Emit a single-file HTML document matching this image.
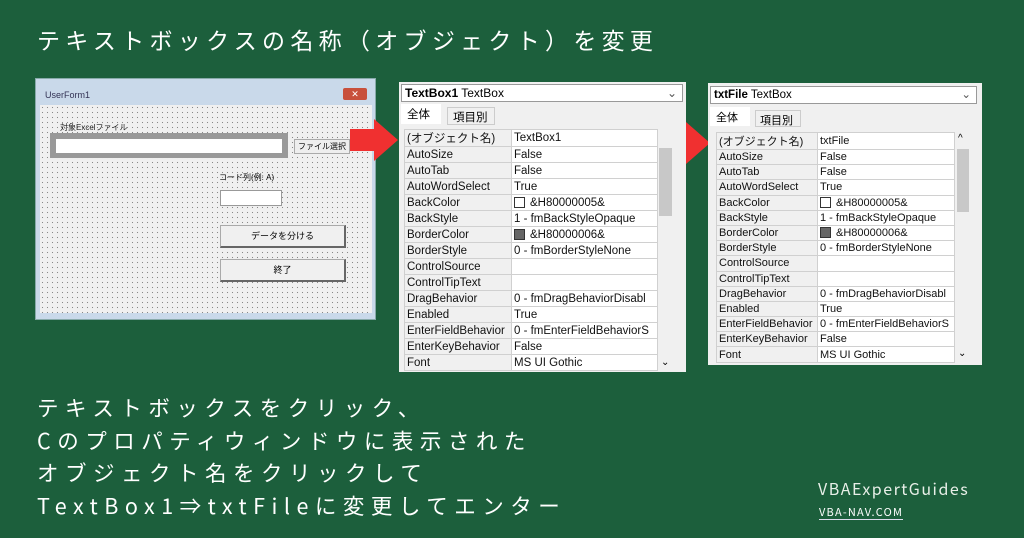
<!DOCTYPE html>
<html><head><meta charset="utf-8"><style>
*{margin:0;padding:0;box-sizing:border-box}
body{width:1024px;height:538px;background:#1c5f3c;position:relative;overflow:hidden;font-family:"Liberation Sans","Noto Sans CJK JP",sans-serif}
.t{position:absolute;color:#fff;font-family:"Noto Sans CJK JP",sans-serif;letter-spacing:2px;white-space:nowrap}
.p{position:absolute;background:#f0f0f0}
.grid{position:absolute;border-collapse:collapse;background:#fff;font-size:11.5px;color:#111;table-layout:fixed}
.grid td{border:1px solid #d0d0d0;padding:0 2px;white-space:nowrap;overflow:hidden}
.grid td:first-child{background:#f0f0f0}
.sw{display:inline-block;width:11px;height:11px;border:1px solid #333;vertical-align:-2px;margin-right:5px}
.arrow{position:absolute;width:0;height:0}
</style></head><body>
<div class="t" style="left:37px;top:22px;font-size:23px;letter-spacing:5.3px">テキストボックスの名称（オブジェクト）を変更</div>

<!-- userform -->
<div class="p" style="left:35px;top:78px;width:341px;height:242px;background:#c9d9ea;border:1px solid #8aa"></div>
<div style="position:absolute;left:45px;top:90px;font-size:9px;color:#335">UserForm1</div>
<div style="position:absolute;left:343px;top:88px;width:24px;height:12px;background:#c8503c;border-radius:2px;color:#fff;font-size:9px;text-align:center;line-height:12px">✕</div>
<div style="position:absolute;left:40px;top:105px;width:332px;height:208px;background-color:#f0f0f0;background-image:radial-gradient(#888 0.6px,transparent 0.8px);background-size:5px 5px"></div>
<div style="position:absolute;left:60px;top:122px;font-size:8px;color:#222">対象Excelファイル</div>
<div style="position:absolute;left:50px;top:133px;width:238px;height:25px;background:#999"></div>
<div style="position:absolute;left:56px;top:139px;width:226px;height:14px;background:#fff"></div>
<div style="position:absolute;left:294px;top:139px;width:56px;height:15px;background:#eee;border:1px solid #aaa;font-size:8px;text-align:center;line-height:13px">ファイル選択</div>
<div style="position:absolute;left:219px;top:172px;font-size:8px">コード列(例: A)</div>
<div style="position:absolute;left:220px;top:190px;width:62px;height:16px;background:#fff;border:1px solid #999"></div>
<div style="position:absolute;left:220px;top:225px;width:126px;height:23px;background:#f0f0f0;border:1px solid #aaa;border-right:2px solid #666;border-bottom:2px solid #666;font-size:9px;text-align:center;line-height:20px">データを分ける</div>
<div style="position:absolute;left:220px;top:259px;width:126px;height:23px;background:#f0f0f0;border:1px solid #aaa;border-right:2px solid #666;border-bottom:2px solid #666;font-size:9px;text-align:center;line-height:20px">終了</div>

<!-- arrows -->
<div style="position:absolute;left:350px;top:129px;width:25px;height:22px;background:#f03030"></div>
<div class="arrow" style="left:374px;top:119px;border-top:21px solid transparent;border-bottom:21px solid transparent;border-left:24px solid #f03030"></div>
<div style="position:absolute;left:662px;top:132px;width:25px;height:22px;background:#f03030"></div>
<div class="arrow" style="left:686px;top:122px;border-top:21px solid transparent;border-bottom:21px solid transparent;border-left:24px solid #f03030"></div>

<!-- panel 2 -->
<div class="p" style="left:399px;top:82px;width:287px;height:290px"></div>
<div style="position:absolute;left:401px;top:84px;width:282px;height:18px;background:#fff;border:1px solid #999;font-size:12px;line-height:16px;padding-left:3px"><b>TextBox1</b> TextBox<span style="position:absolute;right:5px;color:#555">⌄</span></div>
<div style="position:absolute;left:401px;top:104px;width:40px;height:20px;background:#fff;font-size:11.5px;padding:2px 6px">全体</div>
<div style="position:absolute;left:447px;top:107px;width:48px;height:18px;background:#f0f0f0;border:1px solid #ccc;font-size:11.5px;padding:1px 5px">項目別</div>
<div style="position:absolute;left:657px;top:128px;width:17px;height:242px;background:#f0f0f0"><div style="margin:20px 2px 0;height:68px;background:#c8c8c8"></div><div style="position:absolute;bottom:2px;left:4px;font-size:10px">⌄</div></div>
<table class="grid" style="left:404px;top:129px;width:254px">
<col style="width:107px"><col>
<tr style="height:16px"><td>(オブジェクト名)</td><td>TextBox1</td></tr>
<tr style="height:16px"><td>AutoSize</td><td>False</td></tr>
<tr style="height:16px"><td>AutoTab</td><td>False</td></tr>
<tr style="height:16px"><td>AutoWordSelect</td><td>True</td></tr>
<tr style="height:16px"><td>BackColor</td><td><span class="sw" style="background:#fff"></span>&amp;H80000005&amp;</td></tr>
<tr style="height:16px"><td>BackStyle</td><td>1 - fmBackStyleOpaque</td></tr>
<tr style="height:16px"><td>BorderColor</td><td><span class="sw" style="background:#666"></span>&amp;H80000006&amp;</td></tr>
<tr style="height:16px"><td>BorderStyle</td><td>0 - fmBorderStyleNone</td></tr>
<tr style="height:16px"><td>ControlSource</td><td></td></tr>
<tr style="height:16px"><td>ControlTipText</td><td></td></tr>
<tr style="height:16px"><td>DragBehavior</td><td>0 - fmDragBehaviorDisabl</td></tr>
<tr style="height:16px"><td>Enabled</td><td>True</td></tr>
<tr style="height:16px"><td>EnterFieldBehavior</td><td>0 - fmEnterFieldBehaviorS</td></tr>
<tr style="height:16px"><td>EnterKeyBehavior</td><td>False</td></tr>
<tr style="height:16px"><td>Font</td><td>MS UI Gothic</td></tr>
</table>

<!-- panel 3 -->
<div class="p" style="left:708px;top:83px;width:274px;height:282px"></div>
<div style="position:absolute;left:710px;top:86px;width:267px;height:18px;background:#fff;border:1px solid #999;font-size:11.5px;line-height:16px;padding-left:3px"><b>txtFile</b> TextBox<span style="position:absolute;right:5px;color:#555">⌄</span></div>
<div style="position:absolute;left:710px;top:107px;width:40px;height:19px;background:#fff;font-size:11px;padding:2px 6px">全体</div>
<div style="position:absolute;left:755px;top:110px;width:46px;height:17px;background:#f0f0f0;border:1px solid #ccc;font-size:11px;padding:1px 4px">項目別</div>
<div style="position:absolute;left:955px;top:132px;width:16px;height:229px;background:#f0f0f0"><div style="position:absolute;top:1px;left:3px;font-size:10px">^</div><div style="margin:17px 2px 0;height:63px;background:#c8c8c8"></div><div style="position:absolute;bottom:2px;left:3px;font-size:10px">⌄</div></div>
<table class="grid" style="left:716px;top:132px;width:239px;font-size:11px">
<col style="width:101px"><col>
<tr style="height:15.2px"><td>(オブジェクト名)</td><td>txtFile</td></tr>
<tr style="height:15.2px"><td>AutoSize</td><td>False</td></tr>
<tr style="height:15.2px"><td>AutoTab</td><td>False</td></tr>
<tr style="height:15.2px"><td>AutoWordSelect</td><td>True</td></tr>
<tr style="height:15.2px"><td>BackColor</td><td><span class="sw" style="background:#fff"></span>&amp;H80000005&amp;</td></tr>
<tr style="height:15.2px"><td>BackStyle</td><td>1 - fmBackStyleOpaque</td></tr>
<tr style="height:15.2px"><td>BorderColor</td><td><span class="sw" style="background:#666"></span>&amp;H80000006&amp;</td></tr>
<tr style="height:15.2px"><td>BorderStyle</td><td>0 - fmBorderStyleNone</td></tr>
<tr style="height:15.2px"><td>ControlSource</td><td></td></tr>
<tr style="height:15.2px"><td>ControlTipText</td><td></td></tr>
<tr style="height:15.2px"><td>DragBehavior</td><td>0 - fmDragBehaviorDisabl</td></tr>
<tr style="height:15.2px"><td>Enabled</td><td>True</td></tr>
<tr style="height:15.2px"><td>EnterFieldBehavior</td><td>0 - fmEnterFieldBehaviorS</td></tr>
<tr style="height:15.2px"><td>EnterKeyBehavior</td><td>False</td></tr>
<tr style="height:15.2px"><td>Font</td><td>MS UI Gothic</td></tr>
</table>

<div class="t" style="left:37px;top:392px;font-size:21.5px;line-height:32.5px;letter-spacing:6.5px">テキストボックスをクリック、<br>Cのプロパティウィンドウに表示された<br>オブジェクト名をクリックして<br>TextBox1⇒txtFileに変更してエンター</div>
<div class="t" style="left:818px;top:476px;font-size:16px;letter-spacing:1.5px;color:#e8efe8">VBAExpertGuides</div>
<div class="t" style="left:819px;top:505px;font-size:11px;letter-spacing:1.2px;border-bottom:1px solid #dde;line-height:14px">VBA-NAV.COM</div>
</body></html>
